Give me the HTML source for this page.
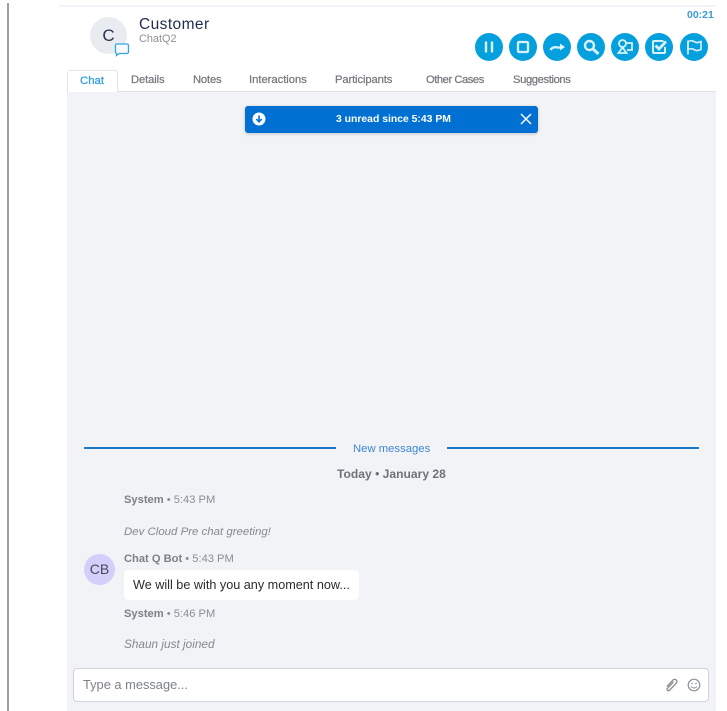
<!DOCTYPE html>
<html>
<head>
<meta charset="utf-8">
<style>
html,body{margin:0;padding:0;background:#fff}
body{width:727px;height:711px;position:relative;overflow:hidden;font-family:"Liberation Sans","Noto Sans CJK JP",sans-serif;filter:blur(.25px)}
.a{position:absolute;white-space:nowrap}
.tab{top:73px;font-size:11.2px;line-height:14px;color:#75797f;font-weight:400;-webkit-text-stroke:.25px #75797f}
.btn{position:absolute;top:33px;width:28px;height:28px;border-radius:50%;background:#04a0de}
.btn svg{position:absolute;left:0;top:0;width:28px;height:28px;fill:none;stroke:#d9f1fb;stroke-width:2}
.meta{font-size:11.150px;line-height:14px;color:#8a8d93;left:124px}
.meta b{color:#7d8086}
.it{font-size:11.450px;line-height:14px;color:#85888e;font-style:italic;left:124px}
</style>
</head>
<body>
<div class="a" style="left:7px;top:3px;width:2px;height:708px;background:#a0a0a0"></div>
<div class="a" style="left:59px;top:5px;width:657px;height:2px;background:#f1f4f8"></div>

<div class="a" style="left:90px;top:17px;width:37px;height:37px;border-radius:50%;background:#e8ebf0;color:#2a3550;font-size:17px;line-height:37px;text-align:center">C</div>
<svg class="a" style="left:114px;top:43px" width="16" height="14" viewBox="0 0 16 14"><path d="M2.500 1h10.500a1.500 1.500 0 0 1 1.500 1.500v6.500a1.500 1.500 0 0 1-1.500 1.500h-8l-2.500 2v-2a1.500 1.500 0 0 1-1-1.500v-6.500a1.500 1.500 0 0 1 1-1.500z" fill="#f5fafe" stroke="#3aa6e0" stroke-width="1.300"/></svg>
<div class="a" style="left:139px;top:16px;font-size:15.500px;line-height:18px;color:#1f2c4d;letter-spacing:.42px">Customer</div>
<div class="a" style="left:139px;top:32px;font-size:10.900px;line-height:14px;color:#8d9198">ChatQ2</div>
<div class="a" style="left:687px;top:9px;font-size:10.500px;line-height:13px;color:#3a9bd8;font-weight:700">00:21</div>

<div class="btn" style="left:475px"><svg viewBox="0 0 28 28"><path d="M11 8.500v11M17 8.500v11" stroke-width="2.400"/></svg></div>
<div class="btn" style="left:509px"><svg viewBox="0 0 28 28"><rect x="9" y="9" width="10" height="10" rx="1" stroke-width="2.300"/></svg></div>
<div class="btn" style="left:543px"><svg viewBox="0 0 28 28"><path d="M7.500 17c1.500-2.500 3.500-3 6-2.700s3 .5 5 .2" stroke-width="2.400"/><path d="M17 10.500l5 3.500-5 3.500z" fill="#e6f6fc" stroke="none"/></svg></div>
<div class="btn" style="left:577px"><svg viewBox="0 0 28 28"><circle cx="12.500" cy="12.500" r="4.500" stroke-width="2.400"/><path d="M16 16l5.500 5" stroke-width="3"/></svg></div>
<div class="btn" style="left:611px"><svg viewBox="0 0 28 28" style="stroke-width:1.800"><path d="M15 10h6v7h-5"/><circle cx="11.500" cy="10.500" r="3.500"/><path d="M11.500 14.500l-4 5.500h8z"/></svg></div>
<div class="btn" style="left:645px"><svg viewBox="0 0 28 28"><path d="M18.500 8H9a1 1 0 0 0-1 1v10a1 1 0 0 0 1 1h10a1 1 0 0 0 1-1v-5"/><path d="M10.500 12.500l3.500 3.500 7-7.500" stroke-width="2.800"/></svg></div>
<div class="btn" style="left:680px"><svg viewBox="0 0 28 28" style="stroke-width:1.600"><path d="M8 7.500v14"/><path d="M8 8.500c3-1.500 5-.5 7 .5s3 .5 6-.5v8c-3 1-4 1.500-6 .5s-4-2-7-.5z"/></svg></div>

<!-- panel -->
<div class="a" style="left:67px;top:92px;width:649px;height:619px;background:#f2f3f7"></div>
<div class="a" style="left:67px;top:91px;width:649px;height:1px;background:#dfe1e5"></div>
<div class="a" style="left:67px;top:70px;width:49px;height:21px;background:#fff;border:1px solid #e3e5e9;border-bottom:none;border-radius:3px 3px 0 0"></div>
<div class="a" style="left:80px;top:74px;font-size:11.400px;line-height:14px;color:#2f9fe0;-webkit-text-stroke:.25px #2f9fe0">Chat</div>
<div class="a tab" style="left:131px;letter-spacing:-.1px">Details</div>
<div class="a tab" style="left:193px;letter-spacing:-.15px">Notes</div>
<div class="a tab" style="left:249px">Interactions</div>
<div class="a tab" style="left:335px;letter-spacing:-.1px">Participants</div>
<div class="a tab" style="left:426px;letter-spacing:-.45px">Other Cases</div>
<div class="a tab" style="left:513px;letter-spacing:-.37px">Suggestions</div>

<!-- banner -->
<div class="a" style="left:245px;top:106px;width:293px;height:27px;background:#0070d2;border-radius:3px;box-shadow:0 1px 3px rgba(0,0,0,.2)"></div>
<svg class="a" style="left:252px;top:112px" width="14" height="14" viewBox="0 0 14 14"><circle cx="7" cy="7" r="6.500" fill="#fff"/><path d="M7 3.500v6M4.300 7L7 9.800 9.700 7" fill="none" stroke="#0070d2" stroke-width="1.600"/></svg>
<div class="a" style="left:336px;top:113px;font-size:10.400px;line-height:14px;color:#fff;font-weight:700">3 unread since 5:43 PM</div>
<svg class="a" style="left:520px;top:113px" width="12" height="12" viewBox="0 0 12 12"><path d="M1 1l10 10M11 1L1 11" stroke="#fff" stroke-width="1.500" fill="none"/></svg>

<!-- new messages -->
<div class="a" style="left:84px;top:447px;width:252px;height:2px;background:#1976c8"></div>
<div class="a" style="left:447px;top:447px;width:252px;height:2px;background:#1976c8"></div>
<div class="a" style="left:353px;top:442px;font-size:11.300px;line-height:15px;color:#3f86d0">New messages</div>
<div class="a" style="left:337px;top:467px;font-size:12.100px;line-height:15px;color:#6f7278;font-weight:700">Today • January 28</div>

<div class="a meta" style="top:493px"><b>System</b> • 5:43 PM</div>
<div class="a it" style="top:525px">Dev Cloud Pre chat greeting!</div>

<div class="a" style="left:84px;top:554px;width:31px;height:31px;border-radius:50%;background:#d2cffa;color:#4a4a55;font-size:14px;line-height:31px;text-align:center">CB</div>
<div class="a meta" style="top:552px"><b>Chat Q Bot</b> • 5:43 PM</div>
<div class="a" style="left:124px;top:570px;width:235px;height:30px;background:#fff;border-radius:4px"></div>
<div class="a" style="left:133px;top:578px;font-size:12.650px;line-height:15px;color:#2b2b30">We will be with you any moment now...</div>

<div class="a meta" style="top:607px"><b>System</b> • 5:46 PM</div>
<div class="a it" style="top:637px;font-size:11.800px">Shaun just joined</div>

<!-- input -->
<div class="a" style="left:73px;top:668px;width:634px;height:32px;background:#fff;border:1px solid #cfd3da;border-radius:4px"></div>
<div class="a" style="left:83px;top:677px;font-size:12.850px;line-height:16px;color:#7d8188">Type a message...</div>
<svg class="a" style="left:664px;top:677px" width="15" height="15" viewBox="0 0 15 15"><path d="M3 9.500l6-6.500a2.300 2.300 0 0 1 3.300 3.200l-6.800 7a1.400 1.400 0 0 1-2-2l6-6.300" fill="none" stroke="#8d9298" stroke-width="1.400"/></svg>
<svg class="a" style="left:687px;top:678px" width="14" height="14" viewBox="0 0 14 14"><circle cx="7" cy="7" r="5.800" fill="none" stroke="#8d9298" stroke-width="1.200"/><circle cx="5" cy="5.500" r=".8" fill="#8d9298"/><circle cx="9" cy="5.500" r=".8" fill="#8d9298"/><path d="M4 8.500c1.500 2 4.500 2 6 0" fill="none" stroke="#8d9298" stroke-width="1"/></svg>
</body>
</html>
